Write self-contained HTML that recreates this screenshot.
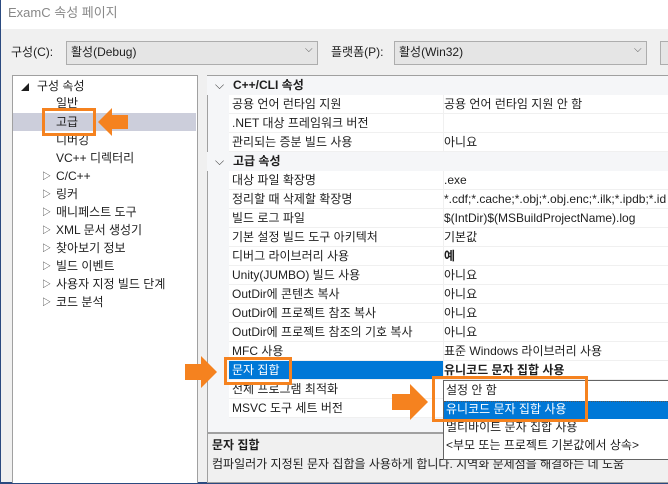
<!DOCTYPE html>
<html><head><meta charset="utf-8"><style>
*{margin:0;padding:0;box-sizing:border-box}
body{width:668px;height:484px;overflow:hidden;background:#f0f0f0;font-family:"Liberation Sans","Noto Sans CJK KR",sans-serif;font-size:12px;color:#1e1e1e;position:relative}
.a{position:absolute;white-space:nowrap}
.t{line-height:18px}
.row{position:absolute;left:229px;width:439px;height:19px;background:#fff;border-bottom:1px solid #f0f0f0}
.row span{position:absolute;top:1px;line-height:17px}
.row .v{left:215px}
.row .l{left:3px}
.hd{position:absolute;left:207px;width:461px;height:19px;background:#f5f6f8;font-weight:bold}
.vl{position:absolute;left:443px;width:1px;background:#f0f0f0}
.ob{position:absolute;border:3px solid #f5821f}
</style></head><body>
<div class="a" style="left:0;top:0;width:668px;height:29px;background:#fff"></div>
<div class="a t" style="left:8px;top:4px;color:#888;font-size:13px">ExamC 속성 페이지</div>
<div class="a" style="left:0;top:0;width:1px;height:484px;background:#2b4a80"></div>
<div class="a" style="left:0;top:482px;width:668px;height:2px;background:#2b4a80"></div>

<div class="a t" style="left:11px;top:43px">구성(C):</div>
<div class="a" style="left:66px;top:41px;width:252px;height:24px;background:#e5e5e5;border:1px solid #adadad"></div>
<div class="a t" style="left:71px;top:43px">활성(Debug)</div>
<div class="a" style="left:305px;top:44px;color:#555;font-size:10px">⌵</div>
<div class="a t" style="left:331px;top:43px">플랫폼(P):</div>
<div class="a" style="left:394px;top:41px;width:253px;height:24px;background:#e5e5e5;border:1px solid #adadad"></div>
<div class="a t" style="left:399px;top:43px">활성(Win32)</div>
<div class="a" style="left:634px;top:44px;color:#555;font-size:10px">⌵</div>
<div class="a" style="left:660px;top:41px;width:20px;height:24px;background:#e5e5e5;border:1px solid #adadad"></div>

<!-- tree -->
<div class="a" style="left:12px;top:75px;width:186px;height:408px;background:#fff;border:1px solid #a0a0a0;border-bottom:none"></div>
<div class="a" style="left:13px;top:113px;width:183px;height:18px;background:#cccedb"></div>
<div class="a" style="left:21px;top:79px;font-size:8px;line-height:18px">◢</div>
<div class="a t" style="left:37px;top:77px">구성 속성</div>
<div class="a t" style="left:56px;top:94px">일반</div>
<div class="a t" style="left:56px;top:113px">고급</div>
<div class="a t" style="left:56px;top:131px">디버깅</div>
<div class="a t" style="left:56px;top:149px">VC++ 디렉터리</div>
<div class="a" style="left:42px;top:167px;font-size:9px;line-height:18px;color:#333">▷</div><div class="a t" style="left:56px;top:167px">C/C++</div>
<div class="a" style="left:42px;top:185px;font-size:9px;line-height:18px;color:#333">▷</div><div class="a t" style="left:56px;top:185px">링커</div>
<div class="a" style="left:42px;top:203px;font-size:9px;line-height:18px;color:#333">▷</div><div class="a t" style="left:56px;top:203px">매니페스트 도구</div>
<div class="a" style="left:42px;top:221px;font-size:9px;line-height:18px;color:#333">▷</div><div class="a t" style="left:56px;top:221px">XML 문서 생성기</div>
<div class="a" style="left:42px;top:239px;font-size:9px;line-height:18px;color:#333">▷</div><div class="a t" style="left:56px;top:239px">찾아보기 정보</div>
<div class="a" style="left:42px;top:257px;font-size:9px;line-height:18px;color:#333">▷</div><div class="a t" style="left:56px;top:257px">빌드 이벤트</div>
<div class="a" style="left:42px;top:275px;font-size:9px;line-height:18px;color:#333">▷</div><div class="a t" style="left:56px;top:275px">사용자 지정 빌드 단계</div>
<div class="a" style="left:42px;top:293px;font-size:9px;line-height:18px;color:#333">▷</div><div class="a t" style="left:56px;top:293px">코드 분석</div>

<!-- grid -->
<div class="a" style="left:207px;top:75px;width:462px;height:358px;background:#f5f6f8;border:1px solid #a0a0a0;border-right:none"></div>
<div class="hd" style="top:76px"><span class="a" style="left:8px;top:2px;font-weight:normal;color:#444">⌵</span><span class="a" style="left:26px;top:1px;line-height:17px">C++/CLI 속성</span></div>
<div class="row" style="top:95px"><span class="l">공용 언어 런타임 지원</span><span class="v">공용 언어 런타임 지원 안 함</span></div>
<div class="row" style="top:114px"><span class="l">.NET 대상 프레임워크 버전</span></div>
<div class="row" style="top:133px"><span class="l">관리되는 증분 빌드 사용</span><span class="v">아니요</span></div>
<div class="hd" style="top:152px"><span class="a" style="left:8px;top:2px;font-weight:normal;color:#444">⌵</span><span class="a" style="left:26px;top:1px;line-height:17px">고급 속성</span></div>
<div class="row" style="top:171px"><span class="l">대상 파일 확장명</span><span class="v">.exe</span></div>
<div class="row" style="top:190px"><span class="l">정리할 때 삭제할 확장명</span><span class="v">*.cdf;*.cache;*.obj;*.obj.enc;*.ilk;*.ipdb;*.id</span></div>
<div class="row" style="top:209px"><span class="l">빌드 로그 파일</span><span class="v">$(IntDir)$(MSBuildProjectName).log</span></div>
<div class="row" style="top:228px"><span class="l">기본 설정 빌드 도구 아키텍처</span><span class="v">기본값</span></div>
<div class="row" style="top:247px"><span class="l">디버그 라이브러리 사용</span><span class="v" style="font-weight:bold">예</span></div>
<div class="row" style="top:266px"><span class="l">Unity(JUMBO) 빌드 사용</span><span class="v">아니요</span></div>
<div class="row" style="top:285px"><span class="l">OutDir에 콘텐츠 복사</span><span class="v">아니요</span></div>
<div class="row" style="top:304px"><span class="l">OutDir에 프로젝트 참조 복사</span><span class="v">아니요</span></div>
<div class="row" style="top:323px"><span class="l">OutDir에 프로젝트 참조의 기호 복사</span><span class="v">아니요</span></div>
<div class="row" style="top:342px"><span class="l">MFC 사용</span><span class="v">표준 Windows 라이브러리 사용</span></div>
<div class="row" style="top:361px"><div class="a" style="left:0;top:0;width:214px;height:18px;background:#0078d7"></div><span class="l" style="color:#fff">문자 집합</span><span class="v" style="font-weight:bold">유니코드 문자 집합 사용</span></div>
<div class="row" style="top:380px"><span class="l">전체 프로그램 최적화</span></div>
<div class="row" style="top:399px"><span class="l">MSVC 도구 세트 버전</span></div>
<div class="vl" style="top:95px;height:57px"></div>
<div class="vl" style="top:171px;height:247px"></div>

<!-- description -->
<div class="a" style="left:207px;top:433px;width:462px;height:50px;background:#f0f0f0;border:1px solid #a0a0a0;border-right:none"></div>
<div class="a t" style="left:212px;top:436px;font-weight:bold">문자 집합</div>
<div class="a t" style="left:212px;top:455px">컴파일러가 지정된 문자 집합을 사용하게 합니다. 지역화 문제점을 해결하는 데 도움</div>

<!-- dropdown -->
<div class="a" style="left:443px;top:380px;width:226px;height:80px;background:#fff;border:1px solid #646464;border-right:none"></div>
<div class="a t" style="left:446px;top:381px">설정 안 함</div>
<div class="a" style="left:444px;top:401px;width:224px;height:18px;background:#0078d7;border-top:1px dotted #555"></div>
<div class="a t" style="left:446px;top:400px;color:#fff">유니코드 문자 집합 사용</div>
<div class="a t" style="left:446px;top:418px">멀티바이트 문자 집합 사용</div>
<div class="a t" style="left:446px;top:436px">&lt;부모 또는 프로젝트 기본값에서 상속&gt;</div>

<!-- orange highlights -->
<div class="ob" style="left:42px;top:108px;width:54px;height:28px"></div>
<svg class="a" style="left:98px;top:108px" width="32" height="28"><polygon points="0,14 14,0 14,7 30,7 30,21 14,21 14,28" fill="#f5821f"/></svg>
<div class="ob" style="left:224px;top:357px;width:68px;height:28px"></div>
<svg class="a" style="left:185px;top:356px" width="34" height="32"><polygon points="0,8 16,8 16,0 32,16 16,32 16,24 0,24" fill="#f5821f"/></svg>
<div class="ob" style="left:432px;top:376px;width:156px;height:46px"></div>
<svg class="a" style="left:392px;top:384px" width="38" height="36"><polygon points="0,10 18,10 18,0 36,18 18,36 18,26 0,26" fill="#f5821f"/></svg>
</body></html>
